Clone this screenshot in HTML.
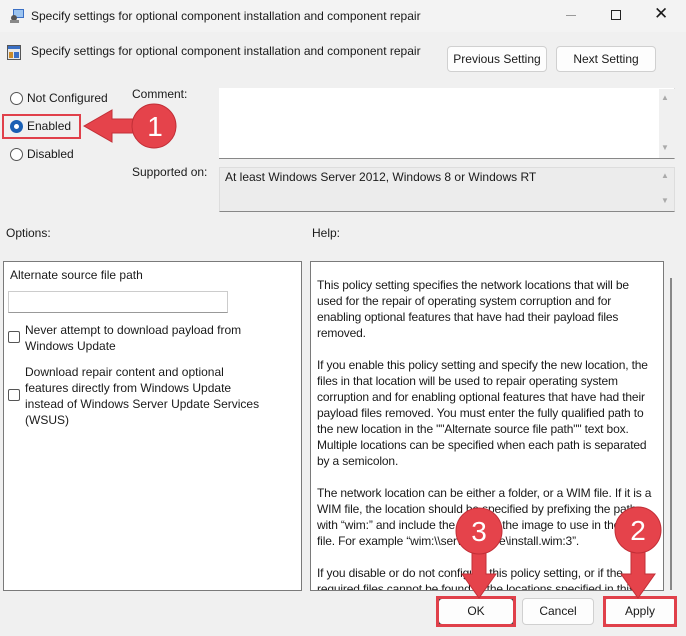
<!DOCTYPE html>
<html><head><style>
*{margin:0;padding:0;box-sizing:border-box}
body{width:686px;height:636px;background:#f0f0f0;font-family:"Liberation Sans",sans-serif;font-size:12px;color:#1a1a1a;position:relative;overflow:hidden}
.a{position:absolute;white-space:nowrap}
.btn{position:absolute;background:#fdfdfd;border:1px solid #d0d0d0;border-radius:4px;text-align:center;font-size:12px}
.rad{position:absolute;width:13px;height:13px;border:1px solid #555;border-radius:50%;background:#fff}
.chk{position:absolute;width:12px;height:12px;border:1px solid #555;border-radius:2px;background:#fff}
.help{position:absolute;left:310px;top:261px;width:354px;height:330px;background:#fff;border:1px solid #7a7a7a;overflow:hidden;padding:15px 6px 0 6px;line-height:16px;font-size:12px;letter-spacing:-0.15px}
.help p{margin-bottom:16px;white-space:normal}
.red{border:3px solid #e0404a;position:absolute}
</style></head><body>
<div class="a" style="left:0;top:0;width:686px;height:32px;background:#f3f3f3"></div>
<svg class="a" style="left:9px;top:8px" width="16" height="16"><rect x="4" y="1" width="11" height="9" fill="#3a6fc4"/><rect x="5" y="2" width="9" height="7" fill="#9cc4f0"/><circle cx="5" cy="10" r="3" fill="#555"/><rect x="1" y="12" width="9" height="3" fill="#888"/></svg>
<div class="a" style="left:31px;top:9px;font-size:12px">Specify settings for optional component installation and component repair</div>
<div class="a" style="left:566px;top:15px;width:10px;height:1px;background:#999"></div>
<div class="a" style="left:611px;top:10px;width:10px;height:10px;border:1px solid #222"></div>
<div class="a" style="left:654px;top:4px;font-size:17px">✕</div>
<svg class="a" style="left:7px;top:45px" width="15" height="16"><rect x="0.5" y="0.5" width="13" height="14" fill="#e8e8e8" stroke="#555"/><rect x="1" y="1" width="12" height="3" fill="#3a6fc4"/><rect x="2" y="7" width="4" height="6" fill="#c98a2a"/><rect x="7" y="7" width="5" height="6" fill="#3a6fc4"/></svg>
<div class="a" style="left:31px;top:44px;font-size:12px">Specify settings for optional component installation and component repair</div>
<div class="btn" style="left:447px;top:46px;width:100px;height:26px;line-height:24px">Previous Setting</div>
<div class="btn" style="left:556px;top:46px;width:100px;height:26px;line-height:24px">Next Setting</div>

<div class="rad" style="left:10px;top:92px"></div><div class="a" style="left:27px;top:91px">Not Configured</div>
<div class="rad" style="left:10px;top:120px;border:4px solid #1a5fb4"></div><div class="a" style="left:27px;top:119px">Enabled</div>
<div class="rad" style="left:10px;top:148px"></div><div class="a" style="left:27px;top:147px">Disabled</div>
<div class="red" style="left:2px;top:114px;width:79px;height:25px;border-width:2px"></div>

<div class="a" style="left:132px;top:87px">Comment:</div>
<div class="a" style="left:219px;top:88px;width:456px;height:71px;background:#fff;border-bottom:1px solid #888;border-right:1px solid #ddd"></div>
<div class="a" style="left:659px;top:89px;width:16px;height:69px;background:#f0f0f0"></div>
<div class="a" style="left:661px;top:93px;font-size:8px;color:#aaa">▲</div>
<div class="a" style="left:661px;top:143px;font-size:8px;color:#aaa">▼</div>
<div class="a" style="left:132px;top:165px">Supported on:</div>
<div class="a" style="left:219px;top:167px;width:456px;height:45px;background:#ececec;border:1px solid #ddd;border-bottom:1px solid #888"></div>
<div class="a" style="left:225px;top:170px">At least Windows Server 2012, Windows 8 or Windows RT</div>
<div class="a" style="left:661px;top:171px;font-size:8px;color:#aaa">▲</div>
<div class="a" style="left:661px;top:196px;font-size:8px;color:#aaa">▼</div>

<div class="a" style="left:6px;top:226px">Options:</div>
<div class="a" style="left:312px;top:226px">Help:</div>
<div class="a" style="left:3px;top:261px;width:299px;height:330px;background:#fff;border:1px solid #7a7a7a"></div>
<div class="a" style="left:10px;top:268px">Alternate source file path</div>
<div class="a" style="left:8px;top:291px;width:220px;height:22px;border:1px solid #ccc;border-bottom:1px solid #999"></div>
<div class="chk" style="left:8px;top:331px"></div>
<div class="a" style="left:25px;top:322px;line-height:16px">Never attempt to download payload from<br>Windows Update</div>
<div class="chk" style="left:8px;top:389px"></div>
<div class="a" style="left:25px;top:364px;line-height:16px">Download repair content and optional<br>features directly from Windows Update<br>instead of Windows Server Update Services<br>(WSUS)</div>

<div class="help">
<p>This policy setting specifies the network locations that will be used for the repair of operating system corruption and for enabling optional features that have had their payload files removed.</p>
<p>If you enable this policy setting and specify the new location, the files in that location will be used to repair operating system corruption and for enabling optional features that have had their payload files removed. You must enter the fully qualified path to the new location in the ""Alternate source file path"" text box. Multiple locations can be specified when each path is separated by a semicolon.</p>
<p>The network location can be either a folder, or a WIM file. If it is a WIM file, the location should be specified by prefixing the path with “wim:” and include the index of the image to use in the WIM file. For example “wim:\\server\share\install.wim:3”.</p>
<p>If you disable or do not configure this policy setting, or if the required files cannot be found at the locations specified in this policy setting, the files will be downloaded from Windows Update.</p>
</div>
<div class="a" style="left:670px;top:278px;width:2px;height:312px;background:#888"></div>

<div class="btn" style="left:438px;top:598px;width:76px;height:27px;line-height:25px;border:1px solid #333">OK</div>
<div class="btn" style="left:522px;top:598px;width:72px;height:27px;line-height:25px">Cancel</div>
<div class="btn" style="left:604px;top:598px;width:72px;height:27px;line-height:25px">Apply</div>
<div class="red" style="left:436px;top:596px;width:80px;height:31px"></div>
<div class="red" style="left:603px;top:596px;width:74px;height:31px"></div>

<svg class="a" style="left:0;top:0" width="686" height="636">
<g fill="#e5434b" stroke="#c22f37" stroke-width="1">
<polygon points="84,126 112,110 112,119 140,119 140,133 112,133 112,142"/>
<circle cx="154" cy="126" r="22"/>
<polygon points="472,540 486,540 486,574 496,574 479,598 462,574 472,574"/>
<circle cx="479" cy="531" r="23"/>
<polygon points="631,540 645,540 645,574 655,574 638,598 621,574 631,574"/>
<circle cx="638" cy="530" r="23"/>
</g>
<g fill="#fff" font-family="Liberation Sans" font-size="28" text-anchor="middle">
<text x="155" y="136">1</text><text x="479" y="541">3</text><text x="638" y="540">2</text>
</g>
</svg>
</body></html>
